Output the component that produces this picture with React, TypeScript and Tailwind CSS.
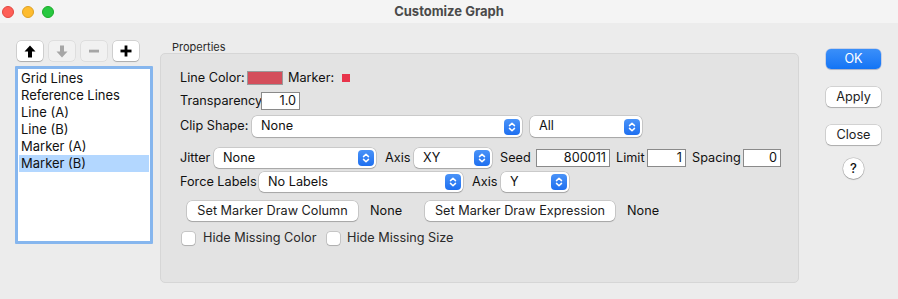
import React from "react";

const Stepper = () => (
  <svg width="16" height="16" viewBox="0 0 16 16" className="shrink-0">
    <defs>
      <linearGradient id="stg" x1="0" y1="0" x2="0" y2="1">
        <stop offset="0" stopColor="#4a93f8" />
        <stop offset="1" stopColor="#1e6ff0" />
      </linearGradient>
    </defs>
    <rect x="0" y="0" width="16" height="16" rx="4" fill="url(#stg)" />
    <path d="M5.5 6.6 L8 4.2 L10.5 6.6" stroke="#fff" strokeWidth="1.5" fill="none" strokeLinecap="round" strokeLinejoin="round" />
    <path d="M5.5 9.4 L8 11.8 L10.5 9.4" stroke="#fff" strokeWidth="1.5" fill="none" strokeLinecap="round" strokeLinejoin="round" />
  </svg>
);

const Select = ({ value, w, h = 20 }: { value: string; w: string; h?: number }) => (
  <div
    className={`${w} flex items-center justify-between bg-white rounded-[5px] pl-[9px] pr-[2px] shadow-[0_0_0_0.5px_rgba(0,0,0,0.22),0_1px_1px_rgba(0,0,0,0.18)]`}
    style={{ height: h }}
  >
    <span className="leading-none">{value}</span>
    <Stepper />
  </div>
);

const TextBox = ({ value, w }: { value: string; w: string }) => (
  <div className={`${w} h-[18px] bg-white border border-[#8a8a8a] flex items-center justify-end pr-[3px] leading-none`}>
    {value}
  </div>
);

const PushButton = ({ label, w, primary }: { label: string; w: string; primary?: boolean }) => (
  <div
    className={`${w} h-[20px] rounded-[5px] flex items-center justify-center leading-none ${
      primary
        ? "bg-gradient-to-b from-[#3a8ff9] to-[#1174f5] text-white shadow-[0_0_0_0.5px_rgba(0,60,200,0.3),0_1px_1px_rgba(0,0,0,0.15)]"
        : "bg-white text-[#1d1d1d] shadow-[0_0_0_0.5px_rgba(0,0,0,0.22),0_1px_1px_rgba(0,0,0,0.18)]"
    }`}
  >
    {label}
  </div>
);

const Checkbox = () => (
  <div className="w-[13px] h-[13px] bg-white rounded-[3px] shadow-[0_0_0_0.5px_rgba(0,0,0,0.25),0_1px_1px_rgba(0,0,0,0.12)] shrink-0" />
);

const ToolBtn = ({ children, disabled }: { children: React.ReactNode; disabled?: boolean }) => (
  <div
    className={`w-[26px] h-[20px] rounded-[4px] flex items-center justify-center ${
      disabled
        ? "bg-[#f1f1f1] shadow-[0_0_0_0.5px_rgba(0,0,0,0.12)]"
        : "bg-white shadow-[0_0_0_0.5px_rgba(0,0,0,0.22),0_1px_1px_rgba(0,0,0,0.18)]"
    }`}
  >
    {children}
  </div>
);

export default function App() {
  const items = ["Grid Lines", "Reference Lines", "Line (A)", "Line (B)", "Marker (A)", "Marker (B)"];
  return (
    <div
      className="w-[898px] h-[299px] bg-[#ececec] text-[12.7px] text-[#111] overflow-hidden"
      style={{ fontFamily: "Inter, 'Noto Sans', 'Liberation Sans', sans-serif" }}
    >
      {/* Title bar */}
      <div className="h-[23px] bg-[#f4f4f4] flex items-center relative">
        <div className="flex items-center gap-[8px] pl-[2px]">
          <div className="w-[12px] h-[12px] rounded-full bg-[#fe5f57] border border-[#e2463f]" />
          <div className="w-[12px] h-[12px] rounded-full bg-[#febc2e] border border-[#dea123]" />
          <div className="w-[12px] h-[12px] rounded-full bg-[#28c840] border border-[#1aab29]" />
        </div>
        <div className="absolute left-0 right-0 top-0 h-[23px] flex items-center justify-center font-bold text-[13px] text-[#4a4a4a] pointer-events-none">
          Customize Graph
        </div>
      </div>

      <div className="flex pt-[18px]">
        {/* Left column */}
        <div className="w-[138px] ml-[15px] flex flex-col">
          <div className="flex gap-[6px] pl-[2px] h-[20px]">
            <ToolBtn>
              <svg width="12" height="13" viewBox="0 0 12 13">
                <path d="M6 0.5 L11.5 6.5 H8 V12.5 H4 V6.5 H0.5 Z" fill="#000" />
              </svg>
            </ToolBtn>
            <ToolBtn disabled>
              <svg width="12" height="13" viewBox="0 0 12 13">
                <path d="M6 12.5 L11.5 6.5 H8 V0.5 H4 V6.5 H0.5 Z" fill="#a6a6a6" />
              </svg>
            </ToolBtn>
            <ToolBtn disabled>
              <svg width="12" height="12" viewBox="0 0 12 12">
                <rect x="1" y="4.7" width="10" height="2.8" fill="#a6a6a6" />
              </svg>
            </ToolBtn>
            <ToolBtn>
              <svg width="12" height="12" viewBox="0 0 12 12">
                <rect x="0.5" y="4.6" width="11" height="2.8" fill="#000" />
                <rect x="4.6" y="0.5" width="2.8" height="11" fill="#000" />
              </svg>
            </ToolBtn>
          </div>
          <div className="mt-[5px] h-[178px] bg-white border-[3px] border-[#86b6ee] p-[1px] rounded-[1px] text-[13px]">
            {items.map((it) => (
              <div
                key={it}
                className={`h-[17px] flex items-center pl-[2px] leading-none ${
                  it === "Marker (B)" ? "bg-[#b3d7ff]" : ""
                }`}
              >
                {it}
              </div>
            ))}
          </div>
        </div>

        {/* Properties group */}
        <div className="ml-[7px] w-[639px] flex flex-col">
          <div className="h-[12px] pl-[12px] text-[11px] leading-[12px] text-[#2a2a2a]">Properties</div>
          <div className="h-[230px] bg-[#e3e3e3] border border-[#d6d6d6] rounded-[5px] pl-[19px] pt-[16px] flex flex-col">
            {/* Row 1 */}
            <div className="h-[16px] flex items-center">
              <span className="w-[67px] leading-none">Line Color:</span>
              <div className="w-[36px] h-[14px] bg-[#d44e5b] border border-[#9a9a9a]" />
              <span className="ml-[5px] w-[54px] leading-none">Marker:</span>
              <div className="w-[8px] h-[8px] bg-[#e8344b]" />
            </div>
            {/* Row 2 */}
            <div className="mt-[6px] h-[18px] flex items-center">
              <span className="w-[81px] leading-none">Transparency</span>
              <TextBox value="1.0" w="w-[39px]" />
            </div>
            {/* Row 3 */}
            <div className="mt-[6px] h-[21px] flex items-center">
              <span className="w-[72px] leading-none">Clip Shape:</span>
              <Select value="None" w="w-[270px]" h={21} />
              <div className="w-[8px]" />
              <Select value="All" w="w-[112px]" h={21} />
            </div>
            {/* Row 4 */}
            <div className="mt-[11px] h-[20px] flex items-center">
              <span className="w-[34px] leading-none">Jitter</span>
              <Select value="None" w="w-[162px]" />
              <span className="ml-[9px] w-[29px] leading-none">Axis</span>
              <Select value="XY" w="w-[78px]" />
              <span className="ml-[8px] w-[36px] leading-none">Seed</span>
              <TextBox value="800011" w="w-[74px]" />
              <span className="ml-[6px] w-[31px] leading-none">Limit</span>
              <TextBox value="1" w="w-[39px]" />
              <span className="ml-[6px] w-[51px] leading-none">Spacing</span>
              <TextBox value="0" w="w-[38px]" />
            </div>
            {/* Row 5 */}
            <div className="mt-[4px] h-[20px] flex items-center">
              <span className="w-[79px] leading-none">Force Labels</span>
              <Select value="No Labels" w="w-[204px]" />
              <span className="ml-[9px] w-[29px] leading-none">Axis</span>
              <Select value="Y" w="w-[68px]" />
            </div>
            {/* Row 6 */}
            <div className="mt-[9px] h-[20px] flex items-center pl-[7px]">
              <PushButton label="Set Marker Draw Column" w="w-[171px]" />
              <span className="ml-[12px] w-[55px] leading-none">None</span>
              <PushButton label="Set Marker Draw Expression" w="w-[190px]" />
              <span className="ml-[12px] leading-none">None</span>
            </div>
            {/* Row 7 */}
            <div className="mt-[9px] h-[16px] flex items-center pl-[2px] text-[#2a2a2a]">
              <Checkbox />
              <span className="ml-[8px] w-[124px] leading-none">Hide Missing Color</span>
              <Checkbox />
              <span className="ml-[7px] leading-none">Hide Missing Size</span>
            </div>
          </div>
        </div>

        {/* Right buttons */}
        <div className="ml-[27px] flex flex-col items-center w-[55px] pt-[8px]">
          <PushButton label="OK" w="w-[55px]" primary />
          <div className="mt-[18px]">
            <PushButton label="Apply" w="w-[55px]" />
          </div>
          <div className="mt-[18px]">
            <PushButton label="Close" w="w-[55px]" />
          </div>
          <div className="mt-[13px] w-[21px] h-[21px] rounded-full bg-white shadow-[0_0_0_0.5px_rgba(0,0,0,0.22),0_1px_1px_rgba(0,0,0,0.18)] flex items-center justify-center text-[13px] leading-none font-medium">
            ?
          </div>
        </div>
      </div>
    </div>
  );
}
